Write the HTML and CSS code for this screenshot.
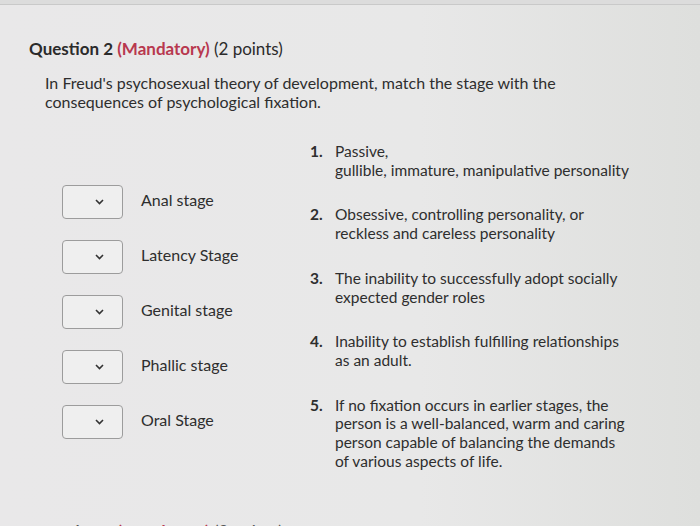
FILE: index.html
```html
<!DOCTYPE html>
<html>
<head>
<meta charset="utf-8">
<link rel="stylesheet" href="styles.css">
</head>
<body>
<div class="page">
  <div class="topline"></div>
  <h2 class="qtitle">Question 2 <span class="mand">(Mandatory)</span> <span class="pts">(2 points)</span></h2>
  <p class="prompt">In Freud's psychosexual theory of development, match the stage with the consequences of psychological fixation.</p>
  <div class="match">
    <div class="stages">
      <div class="row"><div class="sel"><svg width="9" height="6" viewBox="0 0 9 6"><path d="M1 1l3.5 3.5L8 1" fill="none" stroke="#333" stroke-width="1.6"/></svg></div><span class="label">Anal stage</span></div>
      <div class="row"><div class="sel"><svg width="9" height="6" viewBox="0 0 9 6"><path d="M1 1l3.5 3.5L8 1" fill="none" stroke="#333" stroke-width="1.6"/></svg></div><span class="label">Latency Stage</span></div>
      <div class="row"><div class="sel"><svg width="9" height="6" viewBox="0 0 9 6"><path d="M1 1l3.5 3.5L8 1" fill="none" stroke="#333" stroke-width="1.6"/></svg></div><span class="label">Genital stage</span></div>
      <div class="row"><div class="sel"><svg width="9" height="6" viewBox="0 0 9 6"><path d="M1 1l3.5 3.5L8 1" fill="none" stroke="#333" stroke-width="1.6"/></svg></div><span class="label">Phallic stage</span></div>
      <div class="row"><div class="sel"><svg width="9" height="6" viewBox="0 0 9 6"><path d="M1 1l3.5 3.5L8 1" fill="none" stroke="#333" stroke-width="1.6"/></svg></div><span class="label">Oral Stage</span></div>
    </div>
    <ol class="choices">
      <li><span class="num">1.</span><span class="txt">Passive,<br>gullible, immature, manipulative personality</span></li>
      <li><span class="num">2.</span><span class="txt">Obsessive, controlling personality, or reckless and careless personality</span></li>
      <li><span class="num">3.</span><span class="txt">The inability to successfully adopt socially expected gender roles</span></li>
      <li><span class="num">4.</span><span class="txt">Inability to establish fulfilling relationships as an adult.</span></li>
      <li><span class="num">5.</span><span class="txt">If no fixation occurs in earlier stages, the person is a well-balanced, warm and caring person capable of balancing the demands of various aspects of life.</span></li>
    </ol>
  </div>
  <h2 class="qtitle next">Question 3 <span class="mand">(Mandatory)</span> <span class="pts">(2 points)</span></h2>
</div>
</body>
</html>
```
FILE: styles.css
```css
* { box-sizing: border-box; }
html, body { margin: 0; padding: 0; }
body {
  width: 700px;
  height: 526px;
  overflow: hidden;
  background: linear-gradient(90deg, #e9e8e9 0%, #e8e8e8 60%, #dedfdd 100%);
  font-family: Lato, "Open Sans", sans-serif;
  color: #2e2e2e;
}
.page { padding: 0; }
.topline { height: 5px; border-bottom: 1px solid #c9c9c9; background: #dcdcdc; }
.qtitle {
  margin: 34px 0 0 29px;
  font-size: 17px;
  font-weight: 700;
  line-height: 20px;
  color: #2b2b2b;
}
.mand { color: #b8384f; }
.pts { font-weight: 400; }
.prompt {
  margin: 14px 0 0 45px;
  width: 540px;
  font-size: 16px;
  line-height: 19px;
}
.match { display: flex; margin-top: 31px; }
.stages {
  width: 248px;
  margin-left: 62px;
  padding-top: 43px;
  display: flex;
  flex-direction: column;
  gap: 21px;
}
.row { display: flex; align-items: flex-start; height: 34px; }
.sel {
  width: 61px;
  height: 34px;
  border: 1px solid #9c9c9c;
  border-radius: 4px;
  background: #efefef;
  display: flex;
  align-items: center;
  justify-content: flex-end;
  padding-right: 18px;
  flex: none;
}
.label { margin-left: 18px; font-size: 16px; line-height: 19px; margin-top: 5px; }
.choices {
  list-style: none;
  margin: 0;
  padding: 0;
  display: flex;
  flex-direction: column;
  gap: 26px;
  width: 325px;
}
.choices li { display: flex; font-size: 15.5px; line-height: 18.7px; }
.num { width: 25px; flex: none; font-weight: 700; }
.txt { width: 297px; }
.next { margin-top: 52px; margin-left: 29px; color: #555; }
```
